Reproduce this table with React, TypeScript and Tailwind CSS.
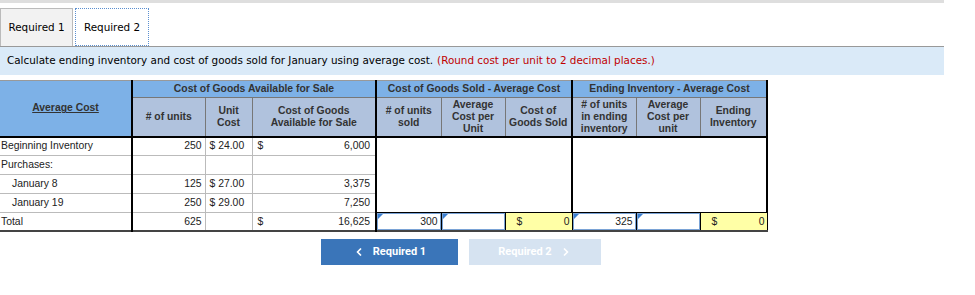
import { ChevronLeft, ChevronRight } from 'lucide-react'

const verdana = { fontFamily: '"DejaVu Sans", Verdana, sans-serif' }

type Row = { label: string; indent?: boolean; units: string; cost: string; dollar?: boolean; total: string }

const rows: Row[] = [
  { label: 'Beginning Inventory', units: '250', cost: '$ 24.00', dollar: true, total: '6,000' },
  { label: 'Purchases:', units: '', cost: '', total: '' },
  { label: 'January 8', indent: true, units: '125', cost: '$ 27.00', total: '3,375' },
  { label: 'January 19', indent: true, units: '250', cost: '$ 29.00', total: '7,250' },
]

function Flag() {
  return (
    <span className="absolute left-0 top-0 h-0 w-0 border-l-[5px] border-b-[5px] border-l-[#3b7fd0] border-b-transparent" />
  )
}

function InputCell({ value }: { value?: string }) {
  return (
    <td className="border border-black p-0">
      <div className="relative h-[17px] border border-[#7aa3d6] bg-white pr-[2px] text-right leading-[15px]">
        <Flag />
        {value}
      </div>
    </td>
  )
}

function YellowCell() {
  return (
    <td className="border border-black bg-[#ffffa6] pl-[11px] pr-[2px]">
      <div className="flex justify-between">
        <span>$</span>
        <span>0</span>
      </div>
    </td>
  )
}

export default function App() {
  const th = 'border-r border-t border-[#777] px-[3px] font-bold leading-[12px] text-[#333]'
  return (
    <div className="h-[295px] w-[975px] bg-white" style={{ fontFamily: '"Liberation Sans", Arial, sans-serif' }}>
      <div className="w-[944px]">
        <div className="h-[3px] bg-[#dedede]" />
        <div className="mt-[5px] flex border-b border-[#999] text-[10.4px]" style={verdana}>
          <div className="flex h-[38px] w-[73px] items-center justify-center border border-b-0 border-[#bbb] bg-[#f2f2f2] pt-[1px] text-black">
            Required 1
          </div>
          <div className="ml-[2px] flex h-[38px] w-[74px] items-center justify-center border border-dotted border-[#5b8fd0] bg-white pt-[1px] text-black">
            Required 2
          </div>
        </div>
        <div className="flex h-[28px] items-center bg-[#daeaf8] px-[7px] text-[10.4px] text-black" style={verdana}>
          Calculate ending inventory and cost of goods sold for January using average cost.
          <span className="ml-1 text-[#c00000]">(Round cost per unit to 2 decimal places.)</span>
        </div>
      </div>

      <table className="mt-[5px] w-[767px] table-fixed border-collapse text-[10.4px] text-[#222]">
        <colgroup>
          <col className="w-[132px]" />
          <col className="w-[73px]" />
          <col className="w-[47px]" />
          <col className="w-[124px]" />
          <col className="w-[65px]" />
          <col className="w-[64px]" />
          <col className="w-[67px]" />
          <col className="w-[64px]" />
          <col className="w-[64px]" />
          <col className="w-[67px]" />
        </colgroup>
        <thead>
          <tr className="h-[17px] bg-[#7db1e7] text-center">
            <th rowSpan={2} className="border-r-2 border-t border-[#999] border-r-black bg-[#7db1e7] font-bold text-[#333]">
              <span className="underline">Average Cost</span>
            </th>
            <th colSpan={3} className="border-r-2 border-t border-[#999] border-r-black font-bold text-[#333]">
              Cost of Goods Available for Sale
            </th>
            <th colSpan={3} className="border-r-2 border-t border-[#999] border-r-black font-bold text-[#333]">
              Cost of Goods Sold - Average Cost
            </th>
            <th colSpan={3} className="border-r-2 border-t border-[#999] border-r-black font-bold text-[#333]">
              Ending Inventory - Average Cost
            </th>
          </tr>
          <tr className="h-[39px] border-b-2 border-black bg-[#b0c2dd] text-center">
            <th className={th}># of units</th>
            <th className={th}>Unit Cost</th>
            <th className={`${th} border-r-2 border-r-black`}>Cost of Goods Available for Sale</th>
            <th className={th}># of units sold</th>
            <th className={th}>Average Cost per Unit</th>
            <th className={`${th} border-r-2 border-r-black`}>Cost of Goods Sold</th>
            <th className={th}># of units in ending inventory</th>
            <th className={th}>Average Cost per unit</th>
            <th className={`${th} border-r-2 border-r-black`}>Ending Inventory</th>
          </tr>
        </thead>
        <tbody>
          {rows.map((r, i) => (
            <tr key={r.label} className="h-[19px]">
              <td className={`border-b border-r-2 border-b-[#bbb] border-r-black ${r.indent ? 'pl-[12px]' : 'pl-[1px]'}`}>{r.label}</td>
              <td className="border-b border-r border-[#bbb] pr-[3px] text-right">{r.units}</td>
              <td className="border-b border-r border-[#bbb] pl-[4px] text-left">{r.cost}</td>
              <td className="border-b border-r-2 border-b-[#bbb] border-r-black px-[5px]">
                <div className="flex justify-between">
                  <span>{r.dollar ? '$' : ''}</span>
                  <span>{r.total}</span>
                </div>
              </td>
              {i === 0 && (
                <>
                  <td colSpan={3} rowSpan={4} className="border-r-2 border-black bg-white" />
                  <td colSpan={3} rowSpan={4} className="border-r-2 border-black bg-white" />
                </>
              )}
            </tr>
          ))}
          <tr className="h-[18px] border-b-2 border-[#444]">
            <td className="border-r-2 border-t border-t-[#bbb] border-r-black pl-[1px]">Total</td>
            <td className="border-r border-[#bbb] pr-[3px] text-right">625</td>
            <td className="border-r border-[#bbb]" />
            <td className="border-r-2 border-r-black px-[5px]">
              <div className="flex justify-between">
                <span>$</span>
                <span>16,625</span>
              </div>
            </td>
            <InputCell value="300" />
            <InputCell />
            <YellowCell />
            <InputCell value="325" />
            <InputCell />
            <YellowCell />
          </tr>
        </tbody>
      </table>

      <div className="ml-[321px] mt-[7px] flex gap-[11px] text-[11px] font-bold text-white" style={{ fontFamily: 'Roboto, Arial, sans-serif' }}>
        <button type="button" className="flex h-[26px] w-[137px] items-center justify-center gap-[8px] bg-[#3a75b9]">
          <ChevronLeft size={12} strokeWidth={3.5} />
          Required 1
        </button>
        <button type="button" className="flex h-[26px] w-[132px] items-center justify-center gap-[8px] bg-[#d6e3f1]">
          Required 2
          <ChevronRight size={12} strokeWidth={3.5} />
        </button>
      </div>
    </div>
  )
}
